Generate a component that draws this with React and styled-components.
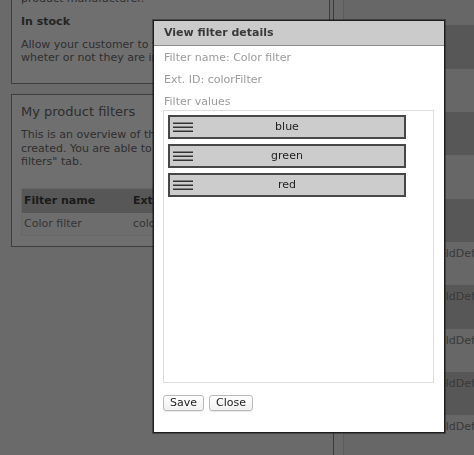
import React from "react";
import styled, { createGlobalStyle } from "styled-components";

const GlobalStyle = createGlobalStyle`
  html, body {
    margin: 0;
    padding: 0;
    height: 455px;
    overflow: hidden;
    background: #ececec;
    font-family: "DejaVu Sans", Verdana, sans-serif;
    font-size: 11px;
  }
  * { box-sizing: border-box; }
`;

const Page = styled.div`
  display: flex;
  align-items: flex-start;
  margin-top: -18px;
  height: 473px;
  overflow: hidden;
`;

const LeftColumn = styled.div`
  width: 333px;
  flex: none;
  padding-left: 11px;
  display: flex;
  flex-direction: column;
  gap: 10.5px;
`;

const Panel = styled.section`
  width: 319px;
  background: #f7f7f7;
  border: 1px solid #8a8a8a;
  padding: 9px 9px ${(p) => p.$pb || 9}px 9px;
  color: #6a6a6a;
`;

const Para = styled.p`
  margin: ${(p) => p.$m || "0"};
  line-height: 13.5px;
  white-space: nowrap;
  overflow: hidden;
`;

const SubHead = styled.h4`
  margin: 9px 0 0;
  font-size: 11px;
  line-height: 14px;
  font-weight: bold;
  color: #505050;
`;

const PanelTitle = styled.h3`
  margin: 0;
  font-size: 13px;
  line-height: 15px;
  font-weight: normal;
  color: #666;
`;

const Table = styled.div`
  display: grid;
  grid-template-columns: 109px 1fr;
  border: 1px solid #e6e6e6;
`;

const HeadCell = styled.div`
  background: #c0c0c0;
  height: 24px;
  line-height: 24px;
  padding-left: 2px;
  font-weight: bold;
  color: #3c3c3c;
`;

const Cell = styled.div`
  background: #f1f1f1;
  height: 22px;
  line-height: 22px;
  padding-left: 2px;
  color: #777;
`;

const RightColumn = styled.div`
  flex: 1;
  min-width: 0;
  border-left: 1px solid #858585;
  padding-left: 9px;
`;

const RowList = styled.div`
  border-left: 1px solid #cfcfcf;
  display: flex;
  flex-direction: column;
`;

const DataRow = styled.div`
  height: 43.33px;
  flex: none;
  background: ${(p) => (p.$dark ? "#c1c1c1" : "#e5e5e5")};
  display: grid;
  grid-template-columns: 88px 1fr;
  padding-top: 5px;
  line-height: 13px;
  color: #808080;
  white-space: nowrap;
  overflow: hidden;
`;

const Overlay = styled.div`
  position: fixed;
  inset: 0;
  background: rgba(0, 0, 0, 0.55);
`;

const Dialog = styled.div`
  position: fixed;
  left: 153px;
  top: 20px;
  width: 292px;
  height: 413px;
  background: #fff;
  border: 1px solid #1e1e1e;
  box-shadow: 0 0 0 1px rgba(0, 0, 0, 0.35);
  display: flex;
  flex-direction: column;
`;

const DialogHeader = styled.div`
  height: 25px;
  line-height: 24px;
  background: #cbcbcb;
  border-bottom: 1px solid #8c8c8c;
  padding-left: 10px;
  font-weight: bold;
  color: #3a3a3a;
`;

const DialogBody = styled.div`
  padding: 1px 10px 0 9px;
  display: flex;
  flex-direction: column;
`;

const InfoLine = styled.div`
  line-height: 22px;
  padding-left: 1px;
  color: #9b9b9b;
`;

const ValuesLabel = styled.div`
  margin-top: 3px;
  line-height: 16px;
  padding-left: 1px;
  color: #9b9b9b;
`;

const ValuesBox = styled.div`
  width: 271px;
  height: 273px;
  border: 1px solid #dcdcdc;
  padding: 4px;
  display: flex;
  flex-direction: column;
  gap: 5px;
`;

const ValueItem = styled.div`
  width: 238px;
  height: 24px;
  background: #cccccc;
  border: 2px solid #474747;
  display: grid;
  grid-template-columns: 26px 1fr 26px;
  align-items: center;
  color: #222;
`;

const ItemLabel = styled.span`
  text-align: center;
  line-height: 20px;
`;

const Handle = styled.svg`
  margin-left: 3px;
  display: block;
`;

const Buttons = styled.div`
  display: flex;
  gap: 5px;
  margin-top: 12px;
`;

const Button = styled.button`
  height: 16px;
  padding: 0 6px;
  font-family: "DejaVu Sans", Verdana, sans-serif;
  font-size: 11px;
  line-height: 14px;
  color: #222;
  background: linear-gradient(#ffffff, #f1f1f1);
  border: 1px solid #b9b9b9;
  border-radius: 3px;
  box-shadow: 0 1px 0 rgba(0, 0, 0, 0.08);
`;

const HandleIcon = () => (
  <Handle width="20" height="12" viewBox="0 0 20 12">
    <rect x="0" y="1.5" width="20" height="1.5" fill="#333" />
    <rect x="0" y="5.5" width="20" height="1.5" fill="#333" />
    <rect x="0" y="9.5" width="20" height="1.5" fill="#333" />
  </Handle>
);

const values = ["blue", "green", "red"];

const fieldRows = [
  { name: "Name", def: "id" },
  { name: "Price", def: "–" },
  { name: "Brand", def: "–" },
  { name: "Stock", def: "–" },
  { name: "Size", def: "–" },
  { name: "Weight", def: "–" },
  { name: "Color", def: "fieldDefinition" },
  { name: "Material", def: "fieldDefinition" },
  { name: "Season", def: "fieldDefinition" },
  { name: "Gender", def: "fieldDefinition" },
  { name: "Style", def: "fieldDefinition" },
];

export default function App() {
  return (
    <>
      <GlobalStyle />
      <Page>
        <LeftColumn>
          <Panel $pb={9}>
            <Para>product manufacturer.</Para>
            <SubHead>In stock</SubHead>
            <Para $m="9px 0 9px">
              Allow your customer to filter products on
              <br />
              wheter or not they are in stock.
            </Para>
          </Panel>
          <Panel $pb={10}>
            <PanelTitle>My product filters</PanelTitle>
            <Para $m="9px 0 19.5px">
              This is an overview of the filters you have
              <br />
              created. You are able to add filters in the "Add
              <br />
              filters" tab.
            </Para>
            <Table>
              <HeadCell>Filter name</HeadCell>
              <HeadCell>Ext. ID</HeadCell>
              <Cell>Color filter</Cell>
              <Cell>colorFilter</Cell>
            </Table>
          </Panel>
        </LeftColumn>
        <RightColumn>
          <RowList>
            {fieldRows.map((r, i) => (
              <DataRow key={i} $dark={i % 2 === 1}>
                <span>{r.name}</span>
                <span>{r.def}</span>
              </DataRow>
            ))}
          </RowList>
        </RightColumn>
      </Page>
      <Overlay />
      <Dialog>
        <DialogHeader>View filter details</DialogHeader>
        <DialogBody>
          <InfoLine>Filter name: Color filter</InfoLine>
          <InfoLine>Ext. ID: colorFilter</InfoLine>
          <ValuesLabel>Filter values</ValuesLabel>
          <ValuesBox>
            {values.map((v) => (
              <ValueItem key={v}>
                <HandleIcon />
                <ItemLabel>{v}</ItemLabel>
                <span />
              </ValueItem>
            ))}
          </ValuesBox>
          <Buttons>
            <Button>Save</Button>
            <Button>Close</Button>
          </Buttons>
        </DialogBody>
      </Dialog>
    </>
  );
}
